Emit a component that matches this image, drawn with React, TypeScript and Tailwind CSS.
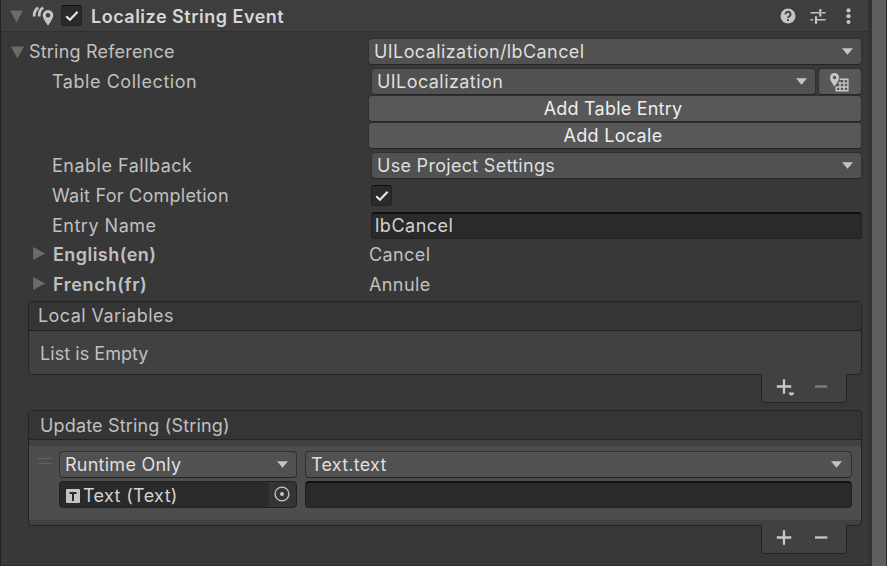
import type { ReactNode } from "react";
import clsx from "clsx";

const Caret = ({ className }: { className?: string }) => (
  <svg width="11" height="7" viewBox="0 0 11 7" className={clsx("shrink-0", className)}>
    <path d="M0 0.3h11L5.5 6.8z" fill="#c4c4c4" />
  </svg>
);

const Check = () => (
  <svg width="14" height="12" viewBox="0 0 14 12" fill="none">
    <path d="M1.2 6.3 4.9 9.8 12.6 1.8" stroke="#e6e6e6" strokeWidth="2.2" />
  </svg>
);

function Foldout({ open, className }: { open?: boolean; className?: string }) {
  return (
    <svg width="13" height="13" viewBox="0 0 13 13" className={clsx("shrink-0", className)}>
      <path d={open ? "M0 0.5h13L6.5 12.5z" : "M0.2 0v13L12 6.5z"} fill="#6b6b6b" />
    </svg>
  );
}

function Checkbox() {
  return (
    <div className="flex size-[21px] shrink-0 items-center justify-center rounded-[3px] border border-[#212121] border-t-[#0f0f0f] bg-[#2a2a2a]">
      <Check />
    </div>
  );
}

function Dropdown({ label, className }: { label: string; className?: string }) {
  return (
    <div
      className={clsx(
        "flex h-[27px] items-center justify-between rounded-[4px] border border-[#303030] border-b-[#242424] bg-[#515151] pr-[8px] text-[#dfdfdf]",
        className
      )}
    >
      <span>{label}</span>
      <Caret />
    </div>
  );
}

function Button({ children, className }: { children: ReactNode; className?: string }) {
  return (
    <div
      className={clsx(
        "flex h-[27px] items-center justify-center rounded-[4px] border border-[#303030] border-b-[#242424] bg-[#585858] text-[#eeeeee]",
        className
      )}
    >
      {children}
    </div>
  );
}

function Row({ label, className, children }: { label: string; className?: string; children: ReactNode }) {
  return (
    <div className={clsx("flex h-[27px] items-center", className)}>
      <span className="w-[342px] shrink-0 pl-[23px]">{label}</span>
      {children}
    </div>
  );
}

function Locale({ name, value, className }: { name: string; value: string; className?: string }) {
  return (
    <div className="flex h-[30px] items-center">
      <Foldout className="mb-[3px] ml-1" />
      <span className={clsx("ml-[7px] w-[316px] font-semibold", className)}>{name}</span>
      <span className="tracking-[0.4px]">{value}</span>
    </div>
  );
}

/* Add / remove tab hanging under a reorderable list */
function ListFooter({ menu, disabled }: { menu?: boolean; disabled?: boolean }) {
  return (
    <div className="relative -mt-px ml-[733px] h-[29px] w-[86px] rounded-b-[4px] border border-t-0 border-[#242424] bg-[#414141]">
      <svg width="84" height="28" viewBox="0 0 84 28">
        <path d="M14.8 12.5h14.500M22 5.3v14.500" stroke="#c8c8c8" strokeWidth="2.300" />
        {menu && <path d="M26.800 18.500h5.300v1.300l-1.800 1.800h-1.600l-1.900-1.800z" fill="#c8c8c8" />}
        <path d="M53 12.500h12.300" stroke={disabled ? "#808080" : "#c8c8c8"} strokeWidth="2.300" />
      </svg>
    </div>
  );
}

function Header() {
  return (
    <div className="flex h-8 items-center border-b border-[#303030] bg-[#3e3e3e] pl-[9px] pr-[17px]">
      <Foldout open className="mt-px" />
      <svg width="22" height="20" viewBox="0 0 22 20" className="ml-[9px]" fill="none">
        <path d="M6.300 1.700Q1.900 4.500 2.100 10.500M11.200 1.700Q6.900 4.500 7.100 10.500" stroke="#c4c4c4" strokeWidth="2.800" />
        <path
          fillRule="evenodd"
          d="M16 4a5.300 5.300 0 0 0-5.300 5.300C10.700 13 16 19.500 16 19.500s5.300-6.500 5.300-10.200A5.300 5.300 0 0 0 16 4zm0 3a2.300 2.300 0 1 1 0 4.600 2.300 2.300 0 0 1 0-4.600z"
          fill="#c4c4c4"
        />
      </svg>
      <div className="ml-[7px]">
        <Checkbox />
      </div>
      <span className="ml-[9px] pt-0.5 font-semibold text-[#d6d6d6]">Localize String Event</span>
      <div className="ml-auto flex items-center">
        <svg width="16" height="16" viewBox="0 0 16 16" fill="none">
          <circle cx="8" cy="8" r="7.500" fill="#c4c4c4" />
          <path d="M5.500 6.300a2.500 2.500 0 1 1 3.600 2.200Q8 9 8 10" stroke="#3e3e3e" strokeWidth="1.800" />
          <path d="M7 11.200h2v1.900H7z" fill="#3e3e3e" />
        </svg>
        <svg width="16" height="16" viewBox="0 0 16 16" className="ml-[14px]" fill="none" stroke="#c4c4c4">
          <path d="M0.500 4.700h9M12 4.700h3.500M0.500 11.800h2.500M7 11.800h8.500" strokeWidth="1.600" />
          <path d="M10.300 1v7.500M6 8.200v7.500" strokeWidth="2.200" />
        </svg>
        <svg width="5" height="16" viewBox="0 0 5 16" className="ml-[20px]" fill="#c4c4c4">
          <circle cx="2.500" cy="2.400" r="2.100" />
          <circle cx="2.500" cy="8.200" r="2.100" />
          <circle cx="2.500" cy="14" r="2" />
        </svg>
      </div>
    </div>
  );
}

export default function App() {
  return (
    <div className="flex h-[566px] w-[887px] overflow-hidden whitespace-nowrap border-l border-[#222222] bg-[#383838] font-['Inter',sans-serif] text-[18px] leading-none tracking-[0.5px] text-[#c0c0c0]">
      <div className="w-[867px] shrink-0 border-b border-[#2c2c2c]">
        <Header />

        <div className="pl-[28px] pr-[6px]">
          <div className="mt-[6px] flex h-[27px] items-center">
            <Foldout open className="-ml-[18px] mt-px" />
            <span className="ml-[5px] w-[340px] shrink-0 tracking-[0.2px]">String Reference</span>
            <Dropdown label="UILocalization/lbCancel" className="-ml-px flex-1 pl-[5px] tracking-[0.41px]" />
          </div>

          <Row label="Table Collection" className="mt-[3px] tracking-[0.55px]">
            <div className="flex flex-1 gap-[2px]">
              <Dropdown label="UILocalization" className="flex-1 pl-[5px] tracking-[0.43px]" />
              <Button className="w-[44px] pr-[2px]">
                <svg width="20" height="20" viewBox="0 0 20 20">
                  <path
                    fillRule="evenodd"
                    d="M5.500 1A4.500 4.500 0 0 0 1 5.500C1 9 5.500 14.500 5.500 14.500S10 9 10 5.500A4.500 4.500 0 0 0 5.500 1zm0 2.800a1.800 1.800 0 1 1 0 3.600 1.800 1.800 0 0 1 0-3.600z"
                    fill="#c8c8c8"
                  />
                  <path d="M10.700 7.200h8.200v11.600H7.200v-4M7.500 15h11.400M9.500 11.100h9.400M11 9.500v9.300M15 7.200v11.600" stroke="#c8c8c8" strokeWidth="1.400" fill="none" />
                </svg>
              </Button>
            </div>
          </Row>

          <div className="ml-[339px]">
            <Button className="pr-1 tracking-[0.22px]">Add Table Entry</Button>
            <Button className="pr-1 tracking-[0.3px]">Add Locale</Button>
          </div>

          <Row label="Enable Fallback" className="mt-[3px]">
            <Dropdown label="Use Project Settings" className="flex-1 pl-[5px] tracking-[0.29px]" />
          </Row>

          <Row label="Wait For Completion" className="mt-[3px] tracking-[0.25px]">
            <Checkbox />
          </Row>

          <Row label="Entry Name" className="mt-[3px]">
            <div className="flex h-[27px] flex-1 items-center rounded-[4px] border border-[#212121] border-t-2 border-t-[#0f0f0f] bg-[#2a2a2a] pl-[3px] text-[#d2d2d2]">
              lbCancel
            </div>
          </Row>

          <div className="mt-px">
            <Locale name="English(en)" value="Cancel" className="tracking-[0.45px]" />
            <Locale name="French(fr)" value="Annule" className="tracking-[0.68px]" />
          </div>

          <div className="-ml-px">
            <div className="mt-px h-[74px] rounded-[4px] border border-[#242424] bg-[#414141]">
              <div className="flex h-[29px] items-center rounded-t-[3px] border-b border-[#242424] bg-[#353535] pl-[9px] tracking-[0.43px]">
                Local Variables
              </div>
              <div className="flex h-[44px] items-center pl-[11px] pt-0.5 tracking-[0.05px]">
                List is Empty
              </div>
            </div>
            <ListFooter menu disabled />

            <div className="mt-[7px] h-[116px] rounded-[4px] border border-[#242424] bg-[#414141]">
              <div className="flex h-[29px] items-center rounded-t-[3px] border-b border-[#242424] bg-[#353535] pl-[11px] pt-0.5 tracking-[0.17px]">
                Update String (String)
              </div>
              <div className="mt-[6px] flex h-[74px] bg-[#4d4d4d] pt-[5px]">
                <svg width="15" height="20" viewBox="0 0 15 20" className="ml-[8px] mr-[7px]">
                  <path d="M0 7.500h15M0 12.500h15" stroke="#626262" />
                </svg>
                <div className="flex w-[238px] flex-col gap-[3px]">
                  <Dropdown label="Runtime Only" className="pl-[5px] tracking-[0.25px]" />
                  <div className="flex h-[27px] items-center rounded-[4px] border border-[#212121] bg-[#2a2a2a] pl-[6px] tracking-[0.35px] text-[#d2d2d2]">
                    <svg width="14" height="14" viewBox="0 0 14 14" className="mr-[3px] mt-0.5">
                      <rect width="14" height="14" rx="1" fill="#c4c4c4" />
                      <path d="M3.500 4h7M7 3v9" stroke="#2a2a2a" strokeWidth="2" />
                    </svg>
                    <span className="pt-0.5">Text (Text)</span>
                    <span className="ml-auto flex h-full w-[27px] items-center justify-center rounded-r-[3px] bg-[#353535] pb-0.5 pr-[2px]">
                      <svg width="16" height="16" viewBox="0 0 16 16">
                        <circle cx="8" cy="8" r="6.900" fill="none" stroke="#c4c4c4" strokeWidth="1.400" />
                        <circle cx="8" cy="8" r="2" fill="#c4c4c4" />
                      </svg>
                    </span>
                  </div>
                </div>
                <div className="ml-[8px] flex w-[547px] flex-col gap-[3px]">
                  <Dropdown label="Text.text" className="pl-[5px] pr-[9px] tracking-[0.25px]" />
                  <div className="h-[27px] rounded-[4px] border border-t-2 border-[#212121] border-t-[#0f0f0f] bg-[#2a2a2a]" />
                </div>
              </div>
            </div>
            <ListFooter />
          </div>
        </div>
      </div>

      {/* Scrollbar */}
      <div className="w-1 bg-[#323232]" />
      <div className="w-[14px] bg-[#5f5f5f]" />
      <div className="w-px bg-[#2a2a2a]" />
    </div>
  );
}
